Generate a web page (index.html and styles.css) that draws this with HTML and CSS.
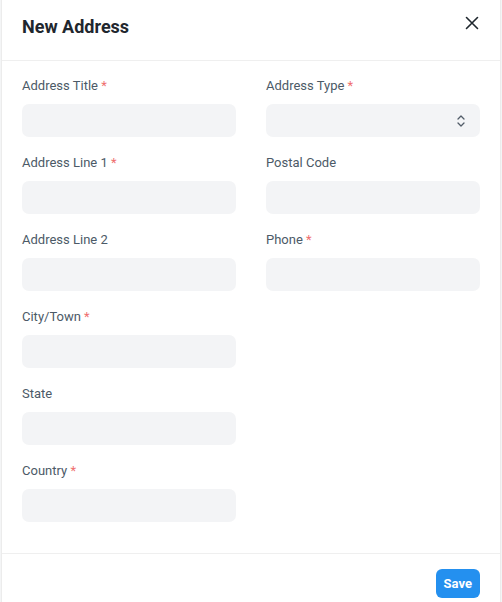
FILE: index.html
```html
<!DOCTYPE html>
<html>
<head>
<meta charset="utf-8">
<link rel="stylesheet" href="styles.css">
</head>
<body>
<div class="modal">
  <div class="header">
    <h3 class="title">New Address</h3>
    <button class="close" aria-label="Close">
      <svg width="14" height="14" viewBox="0 0 14 14"><path d="M1.5 1.5 L12.5 12.5 M12.5 1.5 L1.5 12.5" stroke="#1f272e" stroke-width="1.6" stroke-linecap="round"/></svg>
    </button>
  </div>
  <div class="body">
    <div class="col">
      <div class="field"><label class="label">Address Title <span class="req">*</span></label><div class="input"></div></div>
      <div class="field"><label class="label">Address Line 1 <span class="req">*</span></label><div class="input"></div></div>
      <div class="field"><label class="label">Address Line 2</label><div class="input"></div></div>
      <div class="field"><label class="label">City/Town <span class="req">*</span></label><div class="input"></div></div>
      <div class="field"><label class="label">State</label><div class="input"></div></div>
      <div class="field"><label class="label">Country <span class="req">*</span></label><div class="input"></div></div>
    </div>
    <div class="col">
      <div class="field"><label class="label">Address Type <span class="req">*</span></label>
        <div class="input select">
          <svg class="chev" width="10" height="16" viewBox="0 0 10 16"><path d="M2 6 L5 3 L8 6 M2 10 L5 13 L8 10" fill="none" stroke="#525c68" stroke-width="1.3" stroke-linecap="round" stroke-linejoin="round"/></svg>
        </div>
      </div>
      <div class="field"><label class="label">Postal Code</label><div class="input"></div></div>
      <div class="field"><label class="label">Phone <span class="req">*</span></label><div class="input"></div></div>
    </div>
  </div>
  <div class="footer">
    <button class="save">Save</button>
  </div>
</div>
</body>
</html>
```
FILE: styles.css
```css
html, body {
  margin: 0;
  padding: 0;
}
body {
  background: #f4f5f6;
  font-family: Roboto, "Noto Sans", sans-serif;
  width: 502px;
  height: 602px;
  overflow: hidden;
}
.modal {
  margin-left: 1px;
  width: 498px;
  height: 602px;
  background: #fff;
  border-left: 1px solid #ececec;
  border-right: 1px solid #ececec;
  display: flex;
  flex-direction: column;
}
.header {
  height: 60px;
  border-bottom: 1px solid #efefef;
  display: flex;
  align-items: flex-start;
  justify-content: space-between;
  padding: 0 21px 0 20px;
}
.title {
  margin: 15px 0 0;
  font-size: 18px;
  font-weight: 700;
  color: #1f272e;
  line-height: 24px;
}
.close {
  margin-top: 16px;
  width: 14px;
  height: 14px;
  padding: 0;
  border: 0;
  background: none;
  display: flex;
}
.body {
  display: grid;
  grid-template-columns: 214px 214px;
  column-gap: 30px;
  padding: 15px 20px 0 20px;
  height: 493px;
  border-bottom: 1px solid #efefef;
  box-sizing: border-box;
}
.col {
  display: flex;
  flex-direction: column;
  gap: 16px;
}
.field {
  display: flex;
  flex-direction: column;
}
.label {
  font-size: 13px;
  line-height: 18px;
  padding-top: 1px;
  color: #4c5a67;
  margin-bottom: 9px;
}
.req {
  color: #ef6f6f;
}
.input {
  height: 33px;
  border-radius: 7px;
  background: #f3f4f6;
}
.select {
  display: flex;
  align-items: center;
  justify-content: flex-end;
  padding-right: 14px;
}
.footer {
  display: flex;
  justify-content: flex-end;
  padding: 15px 20px 0;
}
.save {
  height: 29px;
  padding: 0 8px;
  border: 0;
  border-radius: 6px;
  background: #2490ef;
  color: #fff;
  font-family: Roboto, "Noto Sans", sans-serif;
  font-size: 13px;
  font-weight: 700;
}
```
